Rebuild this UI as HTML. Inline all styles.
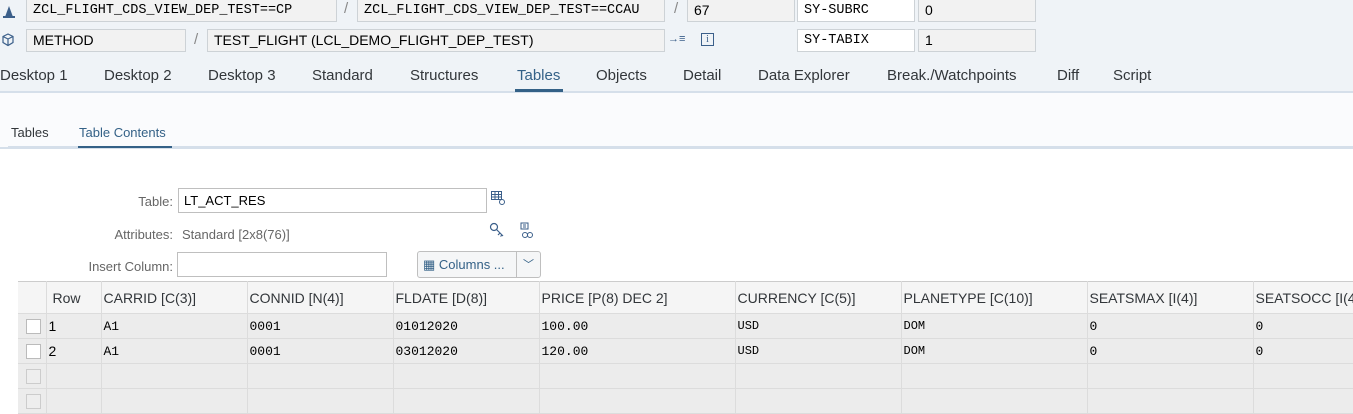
<!DOCTYPE html>
<html><head><style>
*{box-sizing:border-box;margin:0;padding:0}
body{width:1353px;height:413px;overflow:hidden;background:#fff;font-family:"Liberation Sans",sans-serif;position:relative;color:#32363a}
.a{position:absolute}
.top{left:0;top:0;width:1353px;height:93px;background:#eff3f7;border-bottom:2px solid #d5dfea}
.f{position:absolute;height:23px;border:1px solid #cdd2d6;background:#f2f2f2;font-family:"Liberation Mono",monospace;font-size:13.5px;line-height:21px;padding-left:6px;color:#000}
.f.w{background:#fff}
.f.s{font-family:"Liberation Sans",sans-serif;font-size:14px}
.sl{position:absolute;color:#888;font-size:15px}
.tab{position:absolute;top:67px;font-size:15px;color:#32363a}
.sub{left:0;top:93px;width:1353px;height:56px;background:#fafbfd;border-bottom:2px solid #d5dfea}
.lbl{position:absolute;font-size:13px;color:#666;text-align:right}
.in{position:absolute;height:25px;border:1px solid #bfbfbf;background:#fff;font-size:13px;line-height:23px;padding-left:5px;color:#000}
table{position:absolute;left:18px;top:281px;border-collapse:collapse;font-size:14px;width:1400px;table-layout:fixed}
td{border-right:1px solid #dcdcdc;border-bottom:1px solid #dcdcdc;height:25px;padding-left:2px;background:#ececec;font-family:"Liberation Mono",monospace;font-size:13px;color:#000;white-space:nowrap;overflow:hidden}
th{font-weight:normal;text-align:left;height:32px;background:#f5f5f5;border-right:1px solid #dcdcdc;border-bottom:1px solid #dcdcdc;border-top:1px solid #ccc;padding-left:2px;color:#32363a;white-space:nowrap;overflow:hidden}
.cb{width:15px;height:15px;border:1px solid #bbb;background:#fff;margin-left:6px}
.cb.g{background:#eee;border-color:#ccc}
</style></head><body>
<div class="a top"></div>
<svg class="a" style="left:2px;top:5px" width="14" height="14"><path d="M7 1 L11 12 L3 12 Z" fill="#3b5f8a"/><rect x="1" y="11" width="12" height="2" fill="#3b5f8a"/></svg>
<div class="f" style="left:26px;top:-1px;width:311px">ZCL_FLIGHT_CDS_VIEW_DEP_TEST==CP</div>
<div class="sl" style="left:344px;top:0px">/</div>
<div class="f" style="left:357px;top:-1px;width:308px">ZCL_FLIGHT_CDS_VIEW_DEP_TEST==CCAU</div>
<div class="sl" style="left:674px;top:0px">/</div>
<div class="f s" style="left:687px;top:-1px;width:108px">67</div>
<div class="f w" style="left:797px;top:-1px;width:118px">SY-SUBRC</div>
<div class="f s" style="left:918px;top:-1px;width:118px">0</div>
<svg class="a" style="left:1px;top:33px" width="14" height="14" fill="none" stroke="#3b5f8a" stroke-width="1.2"><path d="M7 1 L12 3.5 L12 9.5 L7 12.5 L2 9.5 L2 3.5 Z M2 3.5 L7 6 L12 3.5 M7 6 L7 12.5"/></svg>
<div class="f s" style="left:26px;top:29px;width:160px">METHOD</div>
<div class="sl" style="left:194px;top:31px">/</div>
<div class="f s" style="left:207px;top:29px;width:458px">TEST_FLIGHT (LCL_DEMO_FLIGHT_DEP_TEST)</div>
<div class="a" style="left:668px;top:33px;font-size:11px;color:#3b5f8a">→≡</div>
<div class="a" style="left:701px;top:33px;width:13px;height:13px;border:1px solid #3b5f8a;font-size:10px;line-height:11px;text-align:center;color:#3b5f8a;font-family:'Liberation Serif',serif">i</div>
<div class="f w" style="left:797px;top:29px;width:118px">SY-TABIX</div>
<div class="f s" style="left:918px;top:29px;width:118px">1</div>
<div class="tab" style="left:0">Desktop 1</div>
<div class="tab" style="left:104px">Desktop 2</div>
<div class="tab" style="left:208px">Desktop 3</div>
<div class="tab" style="left:312px">Standard</div>
<div class="tab" style="left:410px">Structures</div>
<div class="tab" style="left:517px;color:#346187">Tables</div>
<div class="a" style="left:515px;top:89px;width:48px;height:3px;background:#346187"></div>
<div class="tab" style="left:596px">Objects</div>
<div class="tab" style="left:683px">Detail</div>
<div class="tab" style="left:758px">Data Explorer</div>
<div class="tab" style="left:887px">Break./Watchpoints</div>
<div class="tab" style="left:1057px">Diff</div>
<div class="tab" style="left:1113px">Script</div>
<div class="a sub"></div>
<div class="a" style="left:8px;top:146px;width:1345px;height:2px;background:#d5dfea"></div>
<div class="a" style="left:11px;top:125px;font-size:13px">Tables</div>
<div class="a" style="left:79px;top:125px;font-size:13px;color:#346187">Table Contents</div>
<div class="a" style="left:78px;top:146px;width:94px;height:2px;background:#346187"></div>
<div class="lbl" style="left:60px;top:194px;width:113px">Table:</div>
<div class="in" style="left:178px;top:188px;width:309px;color:#000">LT_ACT_RES</div>
<svg class="a" style="left:490px;top:190px" width="16" height="16" fill="none" stroke="#3b5f8a" stroke-width="1"><path d="M1.5 1.5h10v8h-10zM1.5 4.5h10M1.5 7h10M5 1.5v8M8.5 1.5v8"/><circle cx="12" cy="12" r="2.5"/></svg>
<div class="lbl" style="left:60px;top:227px;width:113px">Attributes:</div>
<div class="a" style="left:182px;top:227px;font-size:13px;color:#666">Standard [2x8(76)]</div>
<svg class="a" style="left:489px;top:222px" width="16" height="16" fill="none" stroke="#3b5f8a" stroke-width="1.2"><circle cx="5" cy="5" r="3.5"/><path d="M7.5 7.5L14 14M11 11l-2 2M13 13l-1.5 1.5"/></svg>
<svg class="a" style="left:519px;top:222px" width="16" height="17" fill="none" stroke="#3b5f8a" stroke-width="1"><path d="M2 1h7v6H2zM4 3h3M4 5h3"/><circle cx="6" cy="13" r="2.5"/><circle cx="11" cy="13" r="2.5"/></svg>
<div class="lbl" style="left:40px;top:259px;width:133px">Insert Column:</div>
<div class="in" style="left:177px;top:252px;width:210px"></div>
<div class="a" style="left:417px;top:251px;width:124px;height:27px;border:1px solid #bfbfbf;border-radius:3px;background:#f5f6f7"></div>
<div class="a" style="left:516px;top:252px;width:1px;height:25px;background:#bfbfbf"></div>
<div class="a" style="left:423px;top:257px;font-size:13px;color:#346187">▦ Columns ...</div>
<div class="a" style="left:523px;top:256px;font-size:11px;color:#346187">﹀</div>
<table>
<colgroup><col style="width:28px"><col style="width:55px"><col style="width:146px"><col style="width:146px"><col style="width:146px"><col style="width:196px"><col style="width:166px"><col style="width:186px"><col style="width:166px"><col style="width:165px"></colgroup>
<tr><th></th><th style="padding-left:6px">Row</th><th style="border-left:1px solid #777">CARRID [C(3)]</th><th>CONNID [N(4)]</th><th>FLDATE [D(8)]</th><th>PRICE [P(8) DEC 2]</th><th>CURRENCY [C(5)]</th><th>PLANETYPE [C(10)]</th><th>SEATSMAX [I(4)]</th><th>SEATSOCC [I(4)]</th></tr>
<tr><td><div class="cb"></div></td><td style="font-family:'Liberation Sans';font-size:14px">1</td><td style="border-left:1px solid #777">A1</td><td>0001</td><td>01012020</td><td>100.00</td><td style="font-size:12px">USD</td><td style="font-size:12px">DOM</td><td>0</td><td>0</td></tr>
<tr><td><div class="cb"></div></td><td style="font-family:'Liberation Sans';font-size:14px">2</td><td style="border-left:1px solid #777">A1</td><td>0001</td><td>03012020</td><td>120.00</td><td style="font-size:12px">USD</td><td style="font-size:12px">DOM</td><td>0</td><td>0</td></tr>
<tr><td><div class="cb g"></div></td><td></td><td style="border-left:1px solid #777"></td><td></td><td></td><td></td><td></td><td></td><td></td><td></td></tr>
<tr><td><div class="cb g"></div></td><td></td><td style="border-left:1px solid #777"></td><td></td><td></td><td></td><td></td><td></td><td></td><td></td></tr>
</table>
</body></html>
